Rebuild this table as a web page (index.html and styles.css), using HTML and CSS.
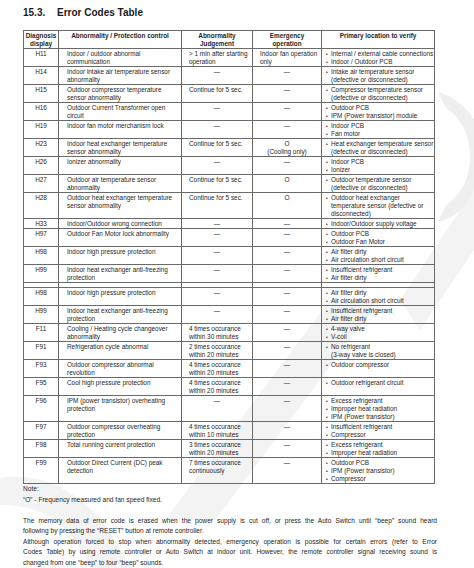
FILE: index.html
```html
<!DOCTYPE html>
<html>
<head>
<meta charset="utf-8">
<link rel="stylesheet" href="styles.css">
</head>
<body>
<div class="page">
  <svg class="watermark" width="474" height="568" viewBox="0 0 474 568">
    <path d="M438 92 C 500 110, 500 205, 438 222 L 446 205 C 478 185, 478 128, 446 108 Z" fill="#efefef"/>
    <path d="M474 190 L 474 250 L 420 330 L 400 300 Z" fill="#f3f3f3"/>
    <path d="M330 300 L 380 300 L 215 520 L 165 520 Z" fill="#f3f3f3"/>
    <path d="M0 478 C 50 470, 100 500, 130 568 L 90 568 C 70 520, 40 505, 0 505 Z" fill="#f3f3f3"/>
  </svg>
  <h1 class="title"><span class="num">15.3.</span><span>Error Codes Table</span></h1>
  <table class="codes">
    <colgroup>
      <col class="c1"><col class="c2"><col class="c3"><col class="c4"><col class="c5">
    </colgroup>
    <thead>
      <tr class="r2">
        <th>Diagnosis<br>display</th>
        <th>Abnormality / Protection control</th>
        <th>Abnormality<br>Judgement</th>
        <th>Emergency<br>operation</th>
        <th>Primary location to verify</th>
      </tr>
    </thead>
    <tbody>
      <tr class="r2"><td class="code">H11</td><td>Indoor / outdoor abnormal<br>communication</td><td>&gt; 1 min after starting<br>operation</td><td>Indoor fan operation<br>only</td><td><div class="b">Internal / external cable connections</div><div class="b">Indoor / Outdoor PCB</div></td></tr>
      <tr class="r2"><td class="code">H14</td><td>Indoor intake air temperature sensor<br>abnormality</td><td class="ctr">—</td><td class="ctr">—</td><td><div class="b">Intake air temperature sensor<br>(defective or disconnected)</div></td></tr>
      <tr class="r2"><td class="code">H15</td><td>Outdoor compressor temperature<br>sensor abnormality</td><td>Continue for 5 sec.</td><td class="ctr">—</td><td><div class="b">Compressor temperature sensor<br>(defective or disconnected)</div></td></tr>
      <tr class="r2"><td class="code">H16</td><td>Outdoor Current Transformer open<br>circuit</td><td class="ctr">—</td><td class="ctr">—</td><td><div class="b">Outdoor PCB</div><div class="b">IPM (Power transistor) module</div></td></tr>
      <tr class="r2"><td class="code">H19</td><td>Indoor fan motor merchanism lock</td><td class="ctr">—</td><td class="ctr">—</td><td><div class="b">Indoor PCB</div><div class="b">Fan motor</div></td></tr>
      <tr class="r2"><td class="code">H23</td><td>Indoor heat exchanger temperature<br>sensor abnormality</td><td>Continue for 5 sec.</td><td class="ctr">O<br>(Cooling only)</td><td><div class="b">Heat exchanger temperature sensor<br>(defective or disconnected)</div></td></tr>
      <tr class="r2"><td class="code">H26</td><td>Ionizer abnormality</td><td class="ctr">—</td><td class="ctr">—</td><td><div class="b">Indoor PCB</div><div class="b">Ionizer</div></td></tr>
      <tr class="r2"><td class="code">H27</td><td>Outdoor air temperature sensor<br>abnormality</td><td>Continue for 5 sec.</td><td class="ctr">O</td><td><div class="b">Outdoor temperature sensor<br>(defective or disconnected)</div></td></tr>
      <tr class="r3"><td class="code">H28</td><td>Outdoor heat exchanger temperature<br>sensor abnormality</td><td>Continue for 5 sec.</td><td class="ctr">O</td><td><div class="b">Outdoor heat exchanger<br>temperature sensor (defective or<br>disconnected)</div></td></tr>
      <tr class="r1"><td class="code">H33</td><td>Indoor/Outdoor wrong connection</td><td class="ctr">—</td><td class="ctr">—</td><td><div class="b">Indoor/Outdoor supply voltage</div></td></tr>
      <tr class="r2"><td class="code">H97</td><td>Outdoor Fan Motor lock abnormality</td><td class="ctr">—</td><td class="ctr">—</td><td><div class="b">Outdoor PCB</div><div class="b">Outdoor Fan Motor</div></td></tr>
      <tr class="r2"><td class="code">H98</td><td>Indoor high pressure protection</td><td class="ctr">—</td><td class="ctr">—</td><td><div class="b">Air filter dirty</div><div class="b">Air circulation short circuit</div></td></tr>
      <tr class="r2"><td class="code">H99</td><td>Indoor heat exchanger anti-freezing<br>protection</td><td class="ctr">—</td><td class="ctr">—</td><td><div class="b">Insufficient refrigerant</div><div class="b">Air filter dirty</div></td></tr>
      <tr class="r0"><td></td><td></td><td></td><td></td><td></td></tr>
      <tr class="r2"><td class="code">H98</td><td>Indoor high pressure protection</td><td class="ctr">—</td><td class="ctr">—</td><td><div class="b">Air filter dirty</div><div class="b">Air circulation short circuit</div></td></tr>
      <tr class="r2"><td class="code">H99</td><td>Indoor heat exchanger anti-freezing<br>protection</td><td class="ctr">—</td><td class="ctr">—</td><td><div class="b">Insufficient refrigerant</div><div class="b">Air filter dirty</div></td></tr>
      <tr class="r2"><td class="code">F11</td><td>Cooling / Heating cycle changeover<br>abnormality</td><td>4 times occurance<br>within 30 minutes</td><td class="ctr">—</td><td><div class="b">4-way valve</div><div class="b">V-coil</div></td></tr>
      <tr class="r2"><td class="code">F91</td><td>Refrigeration cycle abnormal</td><td>2 times occurance<br>within 20 minutes</td><td class="ctr">—</td><td><div class="b">No refrigerant<br>(3-way valve is closed)</div></td></tr>
      <tr class="r2"><td class="code">F93</td><td>Outdoor compressor abnormal<br>revolution</td><td>4 times occurance<br>within 20 minutes</td><td class="ctr">—</td><td><div class="b">Outdoor compressor</div></td></tr>
      <tr class="r2"><td class="code">F95</td><td>Cool high pressure protection</td><td>4 times occurance<br>within 20 minutes</td><td class="ctr">—</td><td><div class="b">Outdoor refrigerant circuit</div></td></tr>
      <tr class="r3"><td class="code">F96</td><td>IPM (power transistor) overheating<br>protection</td><td class="ctr">—</td><td class="ctr">—</td><td><div class="b">Excess refrigerant</div><div class="b">Improper heat radiation</div><div class="b">IPM (Power transistor)</div></td></tr>
      <tr class="r2"><td class="code">F97</td><td>Outdoor compressor overheating<br>protection</td><td>4 times occurance<br>within 10 minutes</td><td class="ctr">—</td><td><div class="b">Insufficient refrigerant</div><div class="b">Compressor</div></td></tr>
      <tr class="r2"><td class="code">F98</td><td>Total running current protection</td><td>3 times occurance<br>within 20 minutes</td><td class="ctr">—</td><td><div class="b">Excess refrigerant</div><div class="b">Improper heat radiation</div></td></tr>
      <tr class="r3"><td class="code">F99</td><td>Outdoor Direct Current (DC) peak<br>detection</td><td>7 times occurance<br>continuously</td><td class="ctr">—</td><td><div class="b">Outdoor PCB</div><div class="b">IPM (Power transistor)</div><div class="b">Compressor</div></td></tr>
    </tbody>
  </table>
  <div class="notes">
    <p class="line">Note:</p>
    <p class="line">“O” - Frequency measured and fan speed fixed.</p>
    <div class="para">
      <p class="jl">The memory data of error code is erased when the power supply is cut off, or press the Auto Switch until “beep” sound heard</p>
      <p class="line">following by pressing the “RESET” button at remote controller.</p>
      <p class="jl">Although operation forced to stop when abnormality detected, emergency operation is possible for certain errors (refer to Error</p>
      <p class="jl">Codes Table) by using remote controller or Auto Switch at indoor unit. However, the remote controller signal receiving sound is</p>
      <p class="line">changed from one “beep” to four “beep” sounds.</p>
    </div>
  </div>
</div>
</body>
</html>
```

FILE: styles.css
```css
* { box-sizing: border-box; }
html, body { margin: 0; padding: 0; background: #fff; }
body { font-family: "Liberation Sans", Arial, sans-serif; color: #262626; }

.page {
  position: relative;
  width: 474px;
  height: 568px;
  overflow: hidden;
  padding: 7px 0 0 23px;
}

.watermark {
  position: absolute;
  left: 0;
  top: 0;
  z-index: 0;
}

.title, .codes, .notes { position: relative; z-index: 1; }

.title {
  margin: 0 0 11px 0;
  font-size: 10px;
  line-height: 12px;
  font-weight: bold;
  color: #1a1a1a;
}
.title .num { display: inline-block; width: 34px; }

.codes {
  border-collapse: collapse;
  table-layout: fixed;
  width: 411px;
  font-size: 6.4px;
  line-height: 8px;
}
.c1 { width: 35px; }
.c2 { width: 123px; }
.c3 { width: 71px; }
.c4 { width: 69px; }
.c5 { width: 113px; }

.codes th, .codes td {
  border: 1px solid #6a6a6a;
  padding: 1px 0 0 0;
  vertical-align: top;
  white-space: nowrap;
  overflow: hidden;
}
.codes th {
  font-weight: bold;
  text-align: center;
  color: #1e1e1e;
}
.codes td { padding-left: 7px; }
.codes td:nth-child(2) { padding-left: 8px; }
.codes td:nth-child(5) { padding-left: 3px; }
.codes td.code, .codes td.ctr { text-align: center; padding-left: 0; }

.r0 { height: 5px; }
.r1 { height: 10px; }
.r2 { height: 18px; }
.r3 { height: 26px; }
.r0 td { padding: 0; }

.b { padding-left: 6px; text-indent: -5px; }
.b::before { content: "•"; display: inline-block; width: 5px; text-indent: 0; font-size: 5px; }

.notes {
  width: 414px;
  margin-top: 0;
  font-size: 6.6px;
  line-height: 10.5px;
}
.notes p { margin: 0; white-space: nowrap; }
.para { margin-top: 10.5px; }
.notes .jl { text-align: justify; text-align-last: justify; white-space: normal; }
```
